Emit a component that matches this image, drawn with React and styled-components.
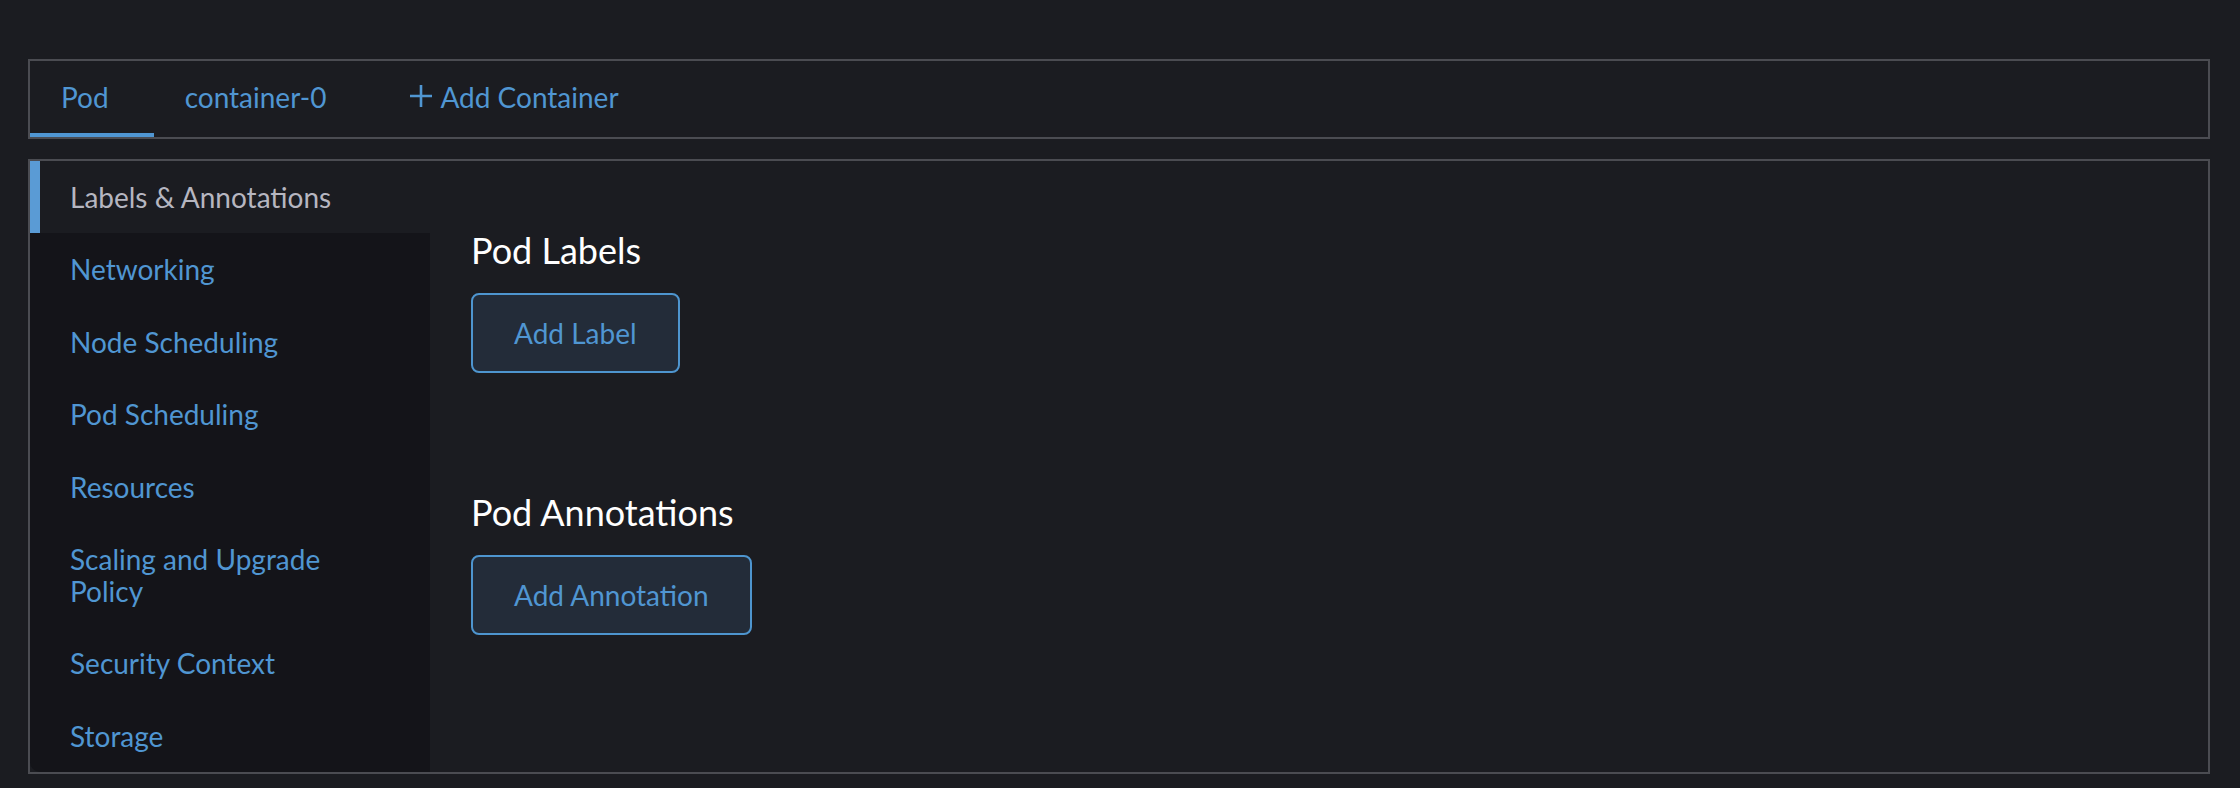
import React from "react";
import styled, { createGlobalStyle } from "styled-components";

const GlobalStyle = createGlobalStyle`
  html, body {
    margin: 0;
    padding: 0;
    background: #1b1c21;
  }
  body {
    font-family: Lato, "Noto Sans", "Liberation Sans", sans-serif;
    -webkit-font-smoothing: antialiased;
  }
  * { box-sizing: border-box; }
`;

const Page = styled.div`
  padding: 59px 30px 16px 28px;
  display: flex;
  flex-direction: column;
  gap: 20px;
`;

const TabBar = styled.ul`
  list-style: none;
  margin: 0;
  padding: 0;
  display: flex;
  align-items: stretch;
  border: 2px solid #4b4c52;
`;

const Tab = styled.li`
  padding: 20px 45px 20px 31px;
  font-size: 28px;
  line-height: 32px;
  color: #5096d2;
  border-bottom: 4px solid ${(p) => (p.$active ? "#5096d2" : "transparent")};
  cursor: pointer;
`;

const AddTab = styled.li`
  padding: 20px 0 24px 39px;
  font-size: 28px;
  line-height: 32px;
  color: #5096d2;
  display: flex;
  align-items: center;
  gap: 8px;
  cursor: pointer;
`;

const PlusIcon = styled.svg`
  width: 22px;
  height: 22px;
  flex: none;
  margin-top: -2px;
`;

const Panel = styled.div`
  display: flex;
  border: 2px solid #4b4c52;
  background: #1b1c21;
`;

const Sidebar = styled.ul`
  list-style: none;
  margin: 0;
  padding: 0;
  width: 400px;
  flex: none;
  background: #141419;
  border-bottom-left-radius: 10px;
  display: flex;
  flex-direction: column;
`;

const SideItem = styled.li`
  padding: 20px 30px 20.4px 30px;
  border-left: 10px solid ${(p) => (p.$active ? "#5a9bd5" : "transparent")};
  background: ${(p) => (p.$active ? "#1b1c21" : "transparent")};
  color: ${(p) => (p.$active ? "#b6b6c0" : "#5096d2")};
  font-size: 28px;
  line-height: 32px;
  cursor: pointer;
`;

const Content = styled.div`
  flex: 1;
  padding: 68px 40px 40px 41px;
  display: flex;
  flex-direction: column;
  align-items: flex-start;
`;

const Section = styled.section`
  display: flex;
  flex-direction: column;
  align-items: flex-start;
  gap: 21px;
  margin-bottom: ${(p) => (p.$last ? "0" : "118px")};
`;

const Heading = styled.h3`
  margin: 0;
  font-size: 36px;
  line-height: 43px;
  font-weight: 400;
  color: #ffffff;
`;

const Button = styled.button`
  height: 80px;
  padding: 0 41px;
  border: 2px solid #4e95cf;
  border-radius: 8px;
  background: #232c39;
  color: #5096d2;
  font-family: inherit;
  font-size: 28px;
  line-height: 32px;
  cursor: pointer;
`;

const sideItems = [
  "Labels & Annotations",
  "Networking",
  "Node Scheduling",
  "Pod Scheduling",
  "Resources",
  "Scaling and Upgrade Policy",
  "Security Context",
  "Storage",
];

export default function App() {
  return (
    <>
      <GlobalStyle />
      <Page>
        <TabBar>
          <Tab $active>Pod</Tab>
          <Tab>container-0</Tab>
          <AddTab>
            <PlusIcon viewBox="0 0 22 22" aria-hidden="true">
              <path d="M11 0v22M0 11h22" stroke="#5096d2" strokeWidth="2.6" fill="none" />
            </PlusIcon>
            Add Container
          </AddTab>
        </TabBar>
        <Panel>
          <Sidebar>
            {sideItems.map((label, i) => (
              <SideItem key={label} $active={i === 0}>
                {label === "Scaling and Upgrade Policy" ? (
                  <>
                    Scaling and Upgrade
                    <br />
                    Policy
                  </>
                ) : (
                  label
                )}
              </SideItem>
            ))}
          </Sidebar>
          <Content>
            <Section>
              <Heading>Pod Labels</Heading>
              <Button>Add Label</Button>
            </Section>
            <Section $last>
              <Heading>Pod Annotations</Heading>
              <Button>Add Annotation</Button>
            </Section>
          </Content>
        </Panel>
      </Page>
    </>
  );
}
